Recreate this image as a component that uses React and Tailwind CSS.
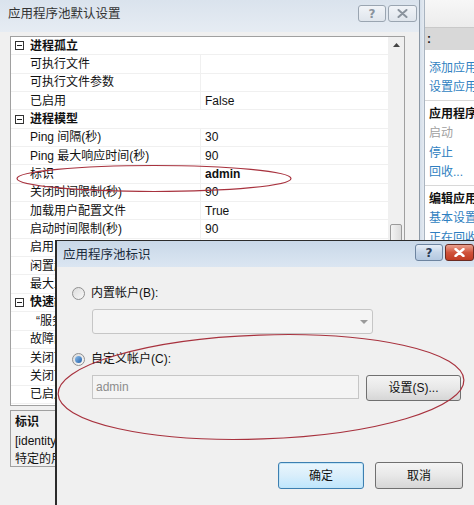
import React from 'react';

const FONT = { fontFamily: '"Liberation Sans", "Noto Sans CJK SC", sans-serif' };

const rows = [
  { cat: true, name: '进程孤立' },
  { name: '可执行文件', value: '' },
  { name: '可执行文件参数', value: '' },
  { name: '已启用', value: 'False' },
  { cat: true, name: '进程模型' },
  { name: 'Ping 间隔(秒)', value: '30' },
  { name: 'Ping 最大响应时间(秒)', value: '90' },
  { name: '标识', value: 'admin', bold: true },
  { name: '关闭时间限制(秒)', value: '90' },
  { name: '加载用户配置文件', value: 'True' },
  { name: '启动时间限制(秒)', value: '90' },
  { name: '启用 32 位应用程序', value: 'False' },
  { name: '闲置超时(分钟)', value: '20' },
  { name: '最大工作进程数', value: '1' },
  { cat: true, name: '快速故障防护' },
  { name: '“服务不可用”响应类型', value: 'HttpLevel', indent: true },
  { name: '故障间隔(分钟)', value: '5' },
  { name: '关闭可执行文件', value: '' },
  { name: '关闭可执行文件参数', value: '' },
  { name: '已启用', value: 'False' },
];

function Collapse() {
  return (
    <span className="w-[9px] h-[9px] border border-[#333] flex items-center justify-center bg-white">
      <span className="w-[5px] h-px bg-[#222]" />
    </span>
  );
}

function PropRow({ row }) {
  if (row.cat) {
    return (
      <div className="flex items-center h-[18.35px] border-b border-[#f0f0f0]">
        <div className="w-[16px] flex justify-center pl-[1px]"><Collapse /></div>
        <span className="pl-[3px] font-bold text-[12px] text-[#111]">{row.name}</span>
      </div>
    );
  }
  return (
    <div className="flex items-center h-[18.35px] border-b border-[#f0f0f0]">
      <div className="w-[16px]" />
      <div className={`w-[174px] border-r border-[#f0f0f0] h-full flex items-center whitespace-nowrap overflow-hidden text-[12px] text-[#111] ${row.indent ? 'pl-[9px]' : 'pl-[3px]'}`}>
        {row.name}
      </div>
      <div className={`pl-[4px] text-[12px] text-[#111] whitespace-nowrap ${row.bold ? 'font-bold' : ''}`}>{row.value}</div>
    </div>
  );
}

function TitleBtn({ kind, active }) {
  if (kind === 'close' && active) {
    return (
      <div className="w-[29px] h-[17px] rounded-[3px] border border-[#6b2b22] bg-gradient-to-b from-[#e9a08f] via-[#d0533b] to-[#c03a22] flex items-center justify-center">
        <svg width="11" height="9" viewBox="0 0 11 9"><path d="M1.5 1 L9.5 8 M9.5 1 L1.5 8" stroke="white" strokeWidth="2.4" strokeLinecap="round" /></svg>
      </div>
    );
  }
  if (kind === 'help') {
    return (
      <div className={`w-[28px] h-[17px] rounded-[3px] border flex items-center justify-center ${active ? 'border-[#6d84a0] bg-gradient-to-b from-[#e7eef7] via-[#c5d5e8] to-[#b4c8e0]' : 'border-[#9aa5b1] bg-gradient-to-b from-[#f1f4f8] to-[#dfe5ec]'}`}>
        <span className={`text-[12px] font-bold leading-none ${active ? 'text-[#2a3a55]' : 'text-[#8a939d]'}`} style={{ fontFamily: '"DejaVu Sans", sans-serif' }}>?</span>
      </div>
    );
  }
  return (
    <div className="w-[29px] h-[17px] rounded-[3px] border border-[#9aa5b1] bg-gradient-to-b from-[#f1f4f8] to-[#dfe5ec] flex items-center justify-center">
      <svg width="11" height="9" viewBox="0 0 11 9"><path d="M1.5 1 L9.5 8 M9.5 1 L1.5 8" stroke="#8a939d" strokeWidth="2" strokeLinecap="round" /></svg>
    </div>
  );
}

function Radio({ checked }) {
  return (
    <span className="w-[13px] h-[13px] rounded-full border border-[#8f8f8f] bg-gradient-to-br from-[#dcdcdc] to-[#f8f8f8] flex items-center justify-center">
      {checked && <span className="w-[7px] h-[7px] rounded-full bg-gradient-to-br from-[#8fc0ec] to-[#1f5fa8]" />}
    </span>
  );
}

function ActionsPane() {
  const link = 'h-[19.5px] flex items-center whitespace-nowrap text-[12px]';
  return (
    <div className="flex-1 flex flex-col bg-white overflow-hidden">
      <div className="h-[28px] bg-gradient-to-b from-[#f7f7f7] to-[#ececec] border-b border-[#c9c9c9]" />
      <div className="h-[22px] bg-[#d8d8d8] flex items-center pl-[2px] text-[12px] font-bold text-[#222]">:</div>
      <div className="flex flex-col pl-[4px] pt-[8px]">
        <div className={`${link} text-[#2f7fc1]`}>添加应用程序池...</div>
        <div className={`${link} text-[#2f7fc1]`}>设置应用程序池默认设置...</div>
        <div className="h-px bg-[#d8d8d8] my-[3px] -ml-[4px]" />
        <div className={`${link} font-bold text-[#111]`}>应用程序池任务</div>
        <div className={`${link} text-[#a0a0a0]`}>启动</div>
        <div className={`${link} text-[#2f7fc1]`}>停止</div>
        <div className={`${link} text-[#2f7fc1]`}>回收...</div>
        <div className="h-px bg-[#d8d8d8] my-[3px] -ml-[4px]" />
        <div className={`${link} font-bold text-[#111]`}>编辑应用程序池</div>
        <div className={`${link} text-[#2f7fc1]`}>基本设置...</div>
        <div className={`${link} text-[#2f7fc1]`}>正在回收...</div>
      </div>
    </div>
  );
}

function DefaultsDialog() {
  return (
    <div className="w-[420px] h-full flex flex-col bg-[#f0f0f0] border-r border-[#8d99a6]">
      <div className="h-[32px] flex items-start bg-gradient-to-b from-[#dae3ed] to-[#e6ecf3] relative">
        <span className="pl-[8px] pt-[5px] text-[12.5px] text-[#333]">应用程序池默认设置</span>
        <div className="ml-auto mt-[5px] mr-[2px] flex gap-[2px]">
          <TitleBtn kind="help" />
          <TitleBtn kind="close" />
        </div>
      </div>
      <div className="pl-[10px] pr-[14px] pt-[4px] flex flex-col">
        <div className="h-[370px] border border-[#a0a0a0] bg-white flex">
          <div className="flex-1 flex flex-col overflow-hidden">
            {rows.map((r, i) => <PropRow key={i} row={r} />)}
          </div>
          <div className="w-[16px] bg-[#f0f0f0] flex flex-col items-center">
            <svg width="7" height="4" viewBox="0 0 7 4" className="mt-[6px]"><path d="M0 4 L3.5 0 L7 4 Z" fill="#444" /></svg>
            <div className="mt-[177px] w-[12px] h-[60px] rounded-[2px] border border-[#9a9a9a] bg-gradient-to-r from-[#f4f4f4] to-[#dcdcdc]" />
          </div>
        </div>
        <div className="mt-[4px] h-[57px] border border-[#a0a0a0] bg-[#f0f0f0] flex flex-col pl-[4px] pt-[2px] text-[12px] text-[#111] leading-[18.5px] overflow-hidden">
          <span className="font-bold">标识</span>
          <span className="whitespace-nowrap">[identityType, username, password] 配置应用程序池，使其以内置帐户运行</span>
          <span className="whitespace-nowrap">特定的用户身份运行。</span>
        </div>
      </div>
    </div>
  );
}

function IdentityDialog() {
  return (
    <div className="absolute left-[55px] top-[240px] w-[422px] h-[265px] flex flex-col bg-[#f0f0f0] border-l-2 border-t border-[#2b2b2b]">
      <div className="h-[26px] flex items-start bg-gradient-to-b from-[#c9d8e8] to-[#dbe6f2]">
        <span className="pl-[6px] pt-[5px] text-[12.5px] text-[#1b2a3c]">应用程序池标识</span>
        <div className="ml-auto mt-[3px] mr-[3px] flex gap-[2px]">
          <TitleBtn kind="help" active />
          <TitleBtn kind="close" active />
        </div>
      </div>
      <div className="flex flex-col pl-[15px] pt-[18px] text-[12px] text-[#111]">
        <div className="flex items-center gap-[6px] h-[16px]">
          <Radio />
          <span>内置帐户(B):</span>
        </div>
        <div className="ml-[20px] mt-[8px] w-[281px] h-[25px] rounded-[3px] border border-[#c6c6c6] bg-[#f4f4f4] flex items-center justify-end pr-[4px]">
          <svg width="8" height="4" viewBox="0 0 8 4"><path d="M0 0 L8 0 L4 4 Z" fill="#9a9a9a" /></svg>
        </div>
        <div className="flex items-center gap-[6px] h-[16px] mt-[17px]">
          <Radio checked />
          <span>自定义帐户(C):</span>
        </div>
        <div className="ml-[20px] mt-[8px] flex gap-[7px]">
          <div className="w-[267px] h-[24px] border border-[#c6c6c6] bg-[#f4f4f4] flex items-center pl-[3px] text-[#8c8c8c]">admin</div>
          <div className="w-[95px] h-[26px] rounded-[3px] border border-[#707070] bg-gradient-to-b from-[#f4f4f4] via-[#e8e8e8] to-[#d6d6d6] flex items-center justify-center">设置(S)...</div>
        </div>
        <div className="flex justify-end gap-[11px] mt-[61px] pr-[14px]">
          <div className="w-[86px] h-[27px] rounded-[3px] border border-[#3c7fb1] bg-gradient-to-b from-[#eaf6fd] via-[#d9eefb] to-[#bee6fd] shadow-[inset_0_0_0_1px_#c2e4f6] flex items-center justify-center">确定</div>
          <div className="w-[88px] h-[27px] rounded-[3px] border border-[#707070] bg-gradient-to-b from-[#f4f4f4] via-[#e8e8e8] to-[#d6d6d6] flex items-center justify-center">取消</div>
        </div>
      </div>
    </div>
  );
}

export default function App() {
  return (
    <div className="w-[474px] h-[505px] relative overflow-hidden bg-[#f0f0f0]" style={FONT}>
      <div className="flex h-full">
        <DefaultsDialog />
        <div className="w-[5px] bg-gradient-to-r from-[#d5dfea] to-[#e4eaf1] border-r border-[#a9b4c0]" />
        <ActionsPane />
      </div>
      <IdentityDialog />
      <svg className="absolute inset-0 pointer-events-none" width="474" height="505" viewBox="0 0 474 505">
        <ellipse cx="154" cy="178.5" rx="137" ry="13" fill="none" stroke="#a8323e" strokeWidth="1.2" />
        <ellipse cx="261" cy="387" rx="203" ry="52" fill="none" stroke="#a8323e" strokeWidth="1.2" transform="rotate(-2 261 387)" />
      </svg>
    </div>
  );
}
